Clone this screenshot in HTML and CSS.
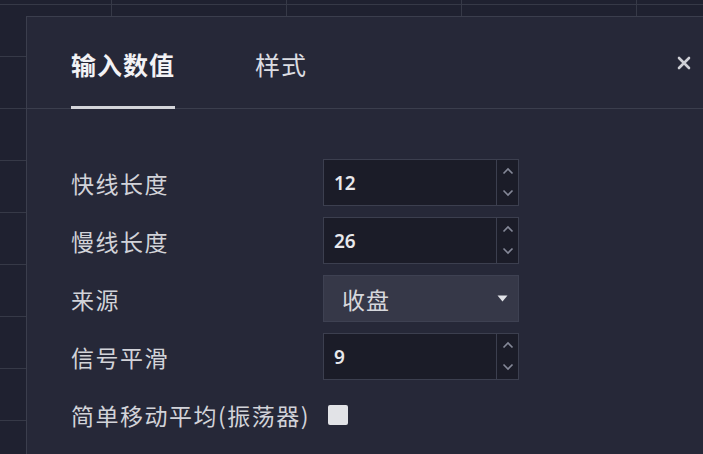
FILE: index.html
```html
<!DOCTYPE html>
<html lang="zh-CN">
<head>
<meta charset="utf-8">
<title>MACD</title>
<link rel="stylesheet" href="styles.css">
</head>
<body>
<div class="dialog">
  <div class="header">
    <div class="tab active">输入数值</div>
    <div class="tab">样式</div>
    <div class="close">
      <svg width="14" height="14" viewBox="0 0 14 14"><path d="M2 2L12 12M12 2L2 12" stroke="#cfd0d6" stroke-width="2.6" stroke-linecap="round"/></svg>
    </div>
  </div>
  <div class="content">
    <div class="label">快线长度</div>
    <div class="field">
      <span class="value">12</span>
      <span class="spin">
        <svg width="12" height="8" viewBox="0 0 12 8"><path d="M1.5 6.5L6 2L10.5 6.5" fill="none" stroke="#858898" stroke-width="1.6"/></svg>
        <svg width="12" height="8" viewBox="0 0 12 8"><path d="M1.5 1.5L6 6L10.5 1.5" fill="none" stroke="#858898" stroke-width="1.6"/></svg>
      </span>
    </div>
    <div class="label">慢线长度</div>
    <div class="field">
      <span class="value">26</span>
      <span class="spin">
        <svg width="12" height="8" viewBox="0 0 12 8"><path d="M1.5 6.5L6 2L10.5 6.5" fill="none" stroke="#858898" stroke-width="1.6"/></svg>
        <svg width="12" height="8" viewBox="0 0 12 8"><path d="M1.5 1.5L6 6L10.5 1.5" fill="none" stroke="#858898" stroke-width="1.6"/></svg>
      </span>
    </div>
    <div class="label">来源</div>
    <div class="select">
      <span class="select-text">收盘</span>
      <svg width="11" height="7" viewBox="0 0 11 7"><path d="M0.5 0.5H10.5L5.5 6.5Z" fill="#e2e3e8"/></svg>
    </div>
    <div class="label">信号平滑</div>
    <div class="field">
      <span class="value">9</span>
      <span class="spin">
        <svg width="12" height="8" viewBox="0 0 12 8"><path d="M1.5 6.5L6 2L10.5 6.5" fill="none" stroke="#858898" stroke-width="1.6"/></svg>
        <svg width="12" height="8" viewBox="0 0 12 8"><path d="M1.5 1.5L6 6L10.5 1.5" fill="none" stroke="#858898" stroke-width="1.6"/></svg>
      </span>
    </div>
    <div class="check-row">
      <span class="label">简单移动平均(振荡器)</span>
      <span class="checkbox"></span>
    </div>
  </div>
</div>
</body>
</html>
```

FILE: styles.css
```css
html, body {
  margin: 0;
  height: 454px;
  overflow: hidden;
}
body {
  box-sizing: border-box;
  padding: 16px 0 0 26px;
  background-color: #1f2130;
  background-image:
    linear-gradient(to bottom, #363947 0, #363947 1px, transparent 1px),
    linear-gradient(to right, #363947 0, #363947 1px, transparent 1px);
  background-size: 175px 52px, 175px 52px;
  background-position: 0 4px, 111px 0;
  font-family: "Noto Sans CJK SC", "Noto Sans", sans-serif;
  color: #cfd0d6;
}
.dialog {
  height: 100%;
  background: #262838;
  border-top: 1px solid #3b3e4d;
  border-left: 1px solid #3b3e4d;
  display: flex;
  flex-direction: column;
}
.header {
  height: 91px;
  flex: none;
  display: flex;
  padding-left: 44px;
  border-bottom: 1px solid #3b3e4d;
}
.tab {
  display: flex;
  align-items: center;
  padding-top: 5px;
  margin-right: 80px;
  font-size: 25px;
  letter-spacing: 1px;
  color: #dcdde2;
  border-bottom: 3px solid transparent;
  margin-bottom: -1px;
}
.tab.active {
  font-weight: 700;
  color: #f2f2f5;
  border-bottom-color: #d4d5da;
}
.close {
  margin-left: auto;
  margin-right: 12px;
  margin-top: 34px;
  width: 14px;
  height: 14px;
}
.content {
  padding: 50px 0 0 44px;
  display: grid;
  grid-template-columns: 252px 196px;
  grid-auto-rows: 47px;
  row-gap: 11px;
}
.label {
  display: flex;
  align-items: center;
  font-size: 23px;
  letter-spacing: 1.5px;
  color: #d2d3d9;
}
.field {
  box-sizing: border-box;
  display: flex;
  background: #1b1c28;
  border: 1px solid #3c3f4f;
}
.value {
  flex: 1;
  display: flex;
  align-items: center;
  padding-left: 10px;
  font-family: "Noto Sans", sans-serif;
  font-size: 19px;
  font-weight: 600;
  color: #e8e8ec;
}
.spin {
  width: 21px;
  border-left: 1px solid #3c3f4f;
  display: flex;
  flex-direction: column;
  align-items: center;
  justify-content: space-between;
  padding: 7px 0 8px;
}
.select {
  box-sizing: border-box;
  display: flex;
  align-items: center;
  justify-content: space-between;
  padding: 0 10px 0 18px;
  background: #363848;
  border: 1px solid #3e4152;
}
.select-text {
  font-size: 23px;
  letter-spacing: 1px;
  color: #d6d7dc;
}
.check-row {
  grid-column: 1 / 3;
  display: flex;
  align-items: center;
}
.checkbox {
  width: 20px;
  height: 20px;
  margin-left: 18px;
  border-radius: 2px;
  background: #e2e3e7;
}
```
